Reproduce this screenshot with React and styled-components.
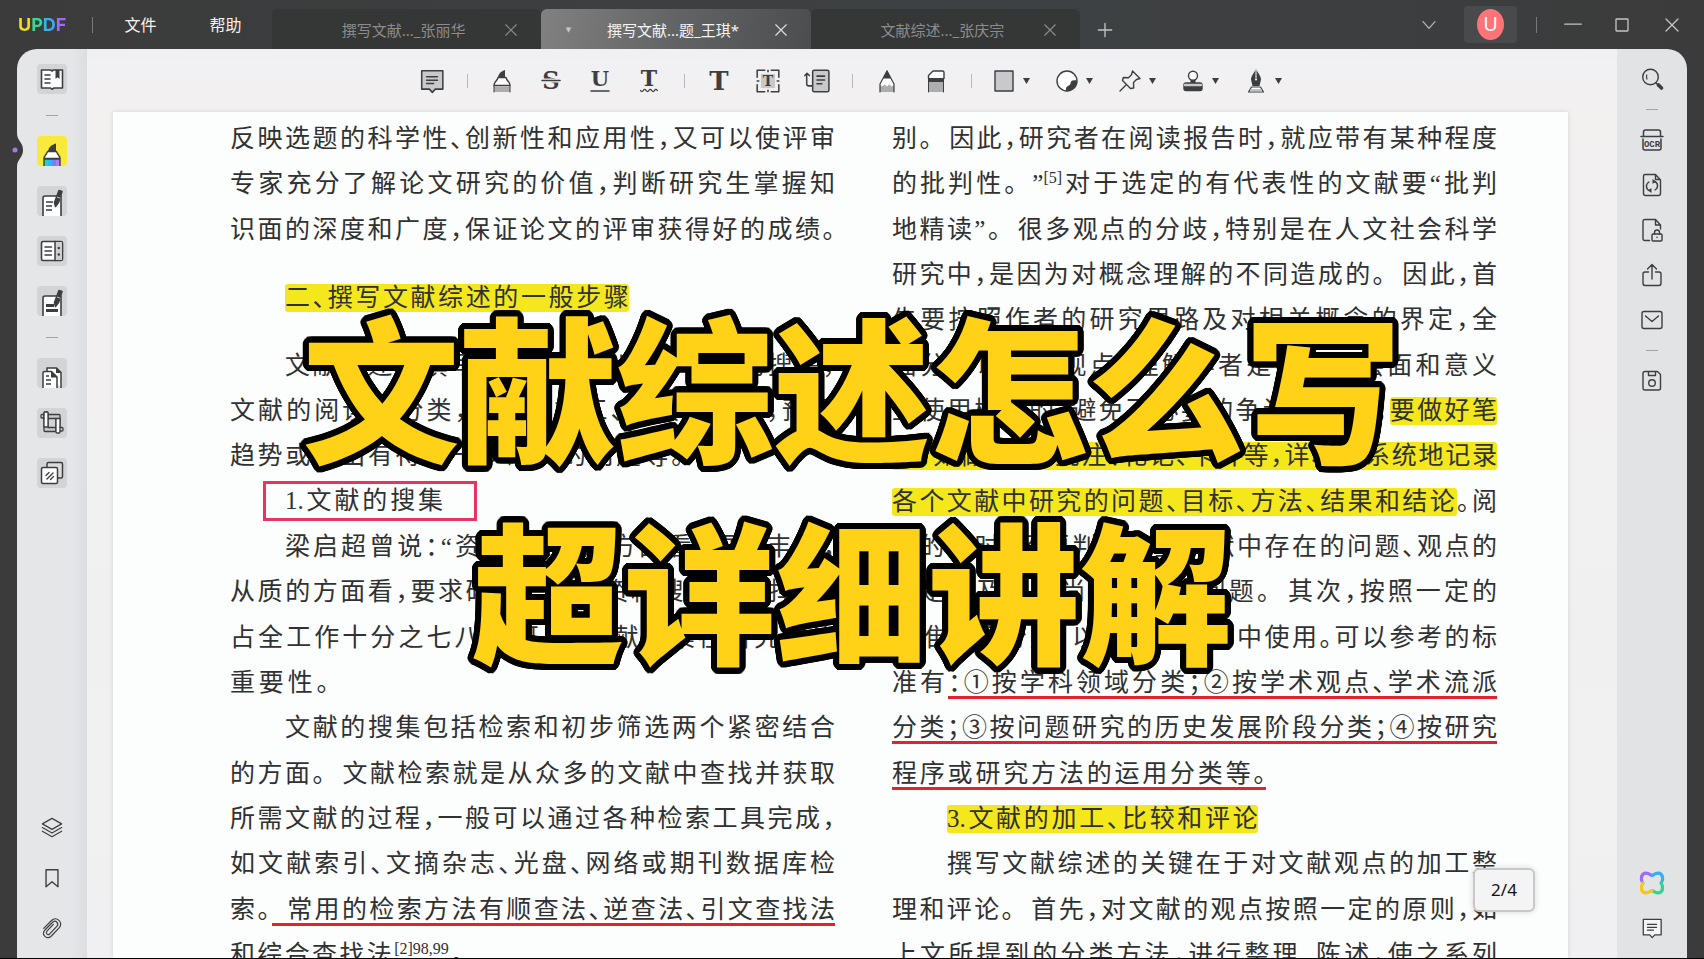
import React, { useState } from 'react';
import styled, { createGlobalStyle } from 'styled-components';

const GlobalStyle = createGlobalStyle`
  * {
    box-sizing: border-box;
  }
  body {
    margin: 0;
    background: #000;
    font-family: "Noto Sans", "Noto Sans CJK SC", sans-serif;
  }
  button {
    padding: 0;
    border: 0;
    background: none;
    color: inherit;
    font: inherit;
    cursor: pointer;
  }
`;

const INK = '#3c3e40';

/* ---------- icons ---------- */

const Svg = ({ size = 24, children, ...rest }) => (
    <svg
        width={size}
        height={size}
        viewBox="0 0 24 24"
        fill="none"
        stroke={INK}
        strokeWidth="1.4"
        strokeLinecap="round"
        strokeLinejoin="round"
        overflow="visible"
        aria-hidden="true"
        {...rest}
    >
        {children}
    </svg>
);

const CommentIcon = ({ fill = '#c9c9cb', size = 26 }) => (
    <Svg size={size}>
        <path d="M2.5 2.5h19.5v17h-7l-2.7 3-2.7-3h-7.1z" fill={fill} />
        <path d="M7 8h10M7 11.2h10M7 14.4h6.500" />
    </Svg>
);

const MarkerIcon = () => (
    <Svg>
        <path d="M8 8c1-4 3-5.500 7-7v8H8z" fill={INK} stroke="none" />
        <path d="M8 8.500h8c.8 4 4 4 4 8H4c0-4 3.200-4 4-8z" fill="#fff" />
        <path d="M4 17.500h16V23H4z" fill="#adadaf" stroke="none" />
        <path d="M4 17v6M20 17v6" strokeWidth="1" />
    </Svg>
);

const Letter = ({ children, x = 12, y = 19, size = 23 }) => (
    <text
        x={x}
        y={y}
        textAnchor="middle"
        fontFamily="'DejaVu Serif', 'Liberation Serif', serif"
        fontWeight="700"
        fontSize={size}
        fill={INK}
        stroke="none"
    >
        {children}
    </text>
);

const StrikeIcon = () => (
    <Svg>
        <Letter y={20} size={24}>S</Letter>
        <path d="M3 11.500h18" stroke="#f2f0f2" strokeWidth="4" />
        <path d="M3 11.500h18" strokeWidth="1.6" />
    </Svg>
);

const UnderlineIcon = () => (
    <Svg>
        <Letter y={17} size={21}>U</Letter>
        <path d="M3 22h18" strokeWidth="1.600" />
    </Svg>
);

const SquigglyIcon = () => (
    <Svg>
        <Letter y={17} size={22}>T</Letter>
        <path d="M3.500 21.500q1.400 2.200 2.800 0t2.800 0 2.800 0 2.800 0 2.800 0 2.800 0" strokeWidth="1.300" />
    </Svg>
);

const TextIcon = () => (
    <Svg>
        <Letter y={21} size={26}>T</Letter>
    </Svg>
);

const TextBoxIcon = () => (
    <Svg size={26}>
        <path d="M5.500 5.500h13v13h-13z" fill="#c9c9cb" stroke="none" />
        <path d="M2 8.500V2h7M15 2h7v6.500M22 15.500V22h-7M9 22H2v-6.500M12 2v1.500M12 20.500V22M2 12h1.500M20.500 12H22" />
        <Letter y={16.5} size={13}>T</Letter>
    </Svg>
);

const CalloutIcon = () => (
    <Svg size={26}>
        <rect x="8" y="2" width="15" height="20" rx="1.500" fill="#c9c9cb" />
        <path d="M12 7.500h7M12 11h7M12 14.500h4.500M7 16.500H4.500a2 2 0 0 1-2-2V5M.8 7L2.800 4.800 5 7" />
    </Svg>
);

const PencilIcon = () => (
    <Svg>
        <path d="M12 2l7 13v8H5v-8z" fill="#fff" stroke="none" />
        <path d="M5 16l2.300 1.500 2.300-2 2.400 2 2.400-2 2.300 2L19 16v7H5z" fill="#adadaf" stroke="none" />
        <path d="M5 23v-8l7-13 7 13v8" strokeWidth="1.200" />
        <path d="M12 1l4 8.500H8z" fill={INK} stroke="none" />
    </Svg>
);

const EraserIcon = () => (
    <Svg>
        <path d="M4 13h16v10H4z" fill="#adadaf" stroke="none" />
        <path d="M4.500 9.500V6.500L9 2h9.500q1.500 0 1.500 1.500v6" fill="#fff" />
        <path d="M4 9h16v4H4z" fill={INK} stroke="none" />
        <path d="M4.500 13v10M19.500 13v10" strokeWidth="1" />
    </Svg>
);

const SquareIcon = () => (
    <Svg>
        <rect x="3" y="2" width="18" height="20" fill="#c9c9cd" />
    </Svg>
);

const StickerIcon = () => (
    <Svg>
        <circle cx="12" cy="12" r="10" fill="#fff" />
        <path d="M22 11.500c-5-.5-6 0-6.500 3-.4 2.500-3 1.500-4.500 4.500v3c6 .5 11-4.500 11-10.500z" fill={INK} stroke="none" />
    </Svg>
);

const PinIcon = () => (
    <Svg>
        <path d="M14.500 2l7.500 7.500-3.500 1-3 3 .2 5.500-3.200.5L4.500 11.500l.8-3 5.200.2 3-3z" />
        <path d="M8 16l-6 6" />
    </Svg>
);

const StampIcon = () => (
    <Svg>
        <path d="M9.500 10h5v5h-5z" fill={INK} stroke="none" />
        <circle cx="12" cy="6.800" r="4.500" fill="#fff" />
        <rect x="3" y="14" width="18" height="7.500" rx="2" fill={INK} />
        <path d="M4 16h16" stroke="#c9c9cb" strokeWidth="2.500" />
    </Svg>
);

const NibIcon = () => (
    <Svg>
        <path d="M12 0c2 4 5 7 5 10.500L15.500 17h-7L7 10.500C7 7 10 4 12 0z" fill={INK} stroke="none" />
        <path d="M12 1v8" stroke="#fff" strokeWidth="1" />
        <circle cx="12" cy="10.500" r="1" fill="#fff" stroke="none" />
        <path d="M7.500 18h9l3 5h-15z" fill="#fff" strokeWidth="1.200" />
        <path d="M7 21h10" stroke="#adadaf" />
    </Svg>
);

const BookIcon = () => (
    <Svg>
        <path d="M1.500 3h9l1.500 1 1.500-1h9v18h-8.500L12 22.200 10.500 21h-9z" fill="#fff" strokeWidth="1.600" />
        <path d="M5 8h5M5 12h5M5 16h5" strokeWidth="1.600" />
        <path d="M15.500 3h4v9l-2-1.800-2 1.800z" fill={INK} stroke="none" />
    </Svg>
);

const HighlighterIcon = () => (
    <Svg size={30} viewBox="0 0 30 30">
        <path d="M11 15c1-4.500 3.500-6 8-7.500V16h-8z" fill={INK} stroke="none" />
        <path d="M10.500 15.500h9c1 3.500 3.500 4 3.500 7H7c0-3 2.500-3.500 3.500-7z" fill="#fff" />
        <path d="M7 23h4v7H7z" fill="#1fd6a4" stroke="none" />
        <path d="M11 23h4v7h-4z" fill="#2cb8f5" stroke="none" />
        <path d="M15 23h4v7h-4z" fill="#5f8bff" stroke="none" />
        <path d="M19 23h4v7h-4z" fill="#b47af0" stroke="none" />
        <path d="M7 23v7M23 23v7M7 23h16" strokeLinecap="butt" />
    </Svg>
);

const EditPageIcon = ({ bold }) => (
    <Svg size={30} viewBox="0 0 30 30" strokeLinecap="butt">
        <path d="M6 30V12q0-2 2-2h16v20" fill="#fff" strokeWidth="1.600" />
        {bold
            ? <path d="M9 19.500h8M9 24.500h12" strokeWidth="3.200" />
            : <path d="M9 16h7M9 20h6M9 24h6" strokeWidth="1.500" />}
        <path d="M22 4.500l3 1-3.500 11-3 4-1-4z" fill={INK} strokeWidth="1.600" />
        <path d="M20 11l3.500 1.200" stroke="#ddd" strokeWidth=".8" />
    </Svg>
);

const FormIcon = () => (
    <Svg>
        <rect x="1.500" y="2.500" width="21" height="19" rx="1.500" fill="#fff" strokeWidth="1.600" />
        <path d="M15 3h7v18h-7z" fill="#cfcfd1" stroke="none" />
        <path d="M15 2.500v19M5 8h6.500M5 12h6.500M5 16h6.500" strokeWidth="1.500" />
        <circle cx="18.800" cy="9" r="1.300" fill={INK} stroke="none" />
        <circle cx="18.800" cy="15.500" r="1.300" fill={INK} stroke="none" />
    </Svg>
);

const PagesIcon = () => (
    <Svg size={30} viewBox="0 0 30 30" strokeLinecap="butt">
        <path d="M10 14v-4h9.500l4.500 4.500V30" fill="#fff" strokeWidth="1.500" />
        <path d="M19 9.500l5.500 5.500H19z" fill={INK} stroke="none" />
        <path d="M6 30V15q0-1.500 1.500-1.500h7L20 19v11" fill="#fff" strokeWidth="1.500" />
        <path d="M14 13l6.500 6.500H14z" fill={INK} stroke="none" />
        <path d="M9 18h3M9 22h5M9 26h5" strokeWidth="1.300" />
    </Svg>
);

const CropIcon = () => (
    <Svg strokeWidth="1.300">
        <path d="M2.500 3.500h17.500v17M4 20.500h17.500" stroke="none" />
        <path d="M7.500 3.500H19q1 0 1 1V16h-4V7.500H7.500z" fill="#c9c9cb" />
        <path d="M4 8V2q0-1 1-1h2q1 0 1 1v14.500h8v4H5q-1 0-1-1z" fill="#c9c9cb" />
        <path d="M4 16V2q0-1 1-1h2q1 0 1 1v14z" fill="#fff" />
        <path d="M16 7.500V21q0 1 1 1h2q1 0 1-1V7.500z" fill="#fff" />
        <path d="M4 3.500H2q-1 0-1 1v1.500q0 1 1 1h2M20 16.500h2q1 0 1 1V19q0 1-1 1h-2" />
    </Svg>
);

const BatchIcon = () => (
    <Svg>
        <rect x="7" y="1.500" width="15.500" height="15.500" rx="1.500" fill="#dcdcdc" strokeWidth="1.500" />
        <rect x="1.500" y="6.500" width="16" height="16" rx="1.500" fill="#fff" strokeWidth="1.500" />
        <path d="M6 14.500l3-3M7 18l6-6M10.500 18.500l3-3" strokeWidth="1.400" />
    </Svg>
);

const LayersIcon = () => (
    <Svg size={22} strokeWidth="1.300">
        <path d="M12 1.500l10.500 6L12 13.500l-10.500-6zM1.500 11.500l10.500 6 10.500-6M1.500 15.500l10.500 6 10.500-6" />
    </Svg>
);

const BookmarkIcon = () => (
    <Svg size={22} strokeWidth="1.500">
        <path d="M5.500 3h13v18.500L12 16l-6.500 5.500z" />
    </Svg>
);

const ClipIcon = () => (
    <Svg size={22} strokeWidth="1.300">
        <path d="M3 12.500l8.500-8.700c5-5 13.500 2 8.500 7.700l-9 9.500C7 25 -.5 19.500 4 14.500l9-9c3-2.500 7 1.500 4.500 4.500l-8 8.500c-2 2-5-.5-3-3l7-7.500" />
    </Svg>
);

const SearchIcon = () => (
    <Svg>
        <circle cx="10.500" cy="10" r="7.800" />
        <path d="M6.800 8q-.8 2 .2 4" strokeWidth="1.200" />
        <path d="M16 16l2 2" />
        <path d="M18.500 18l3 3" strokeWidth="3.600" />
    </Svg>
);

const OcrIcon = () => (
    <Svg>
        <path d="M3.500 7.500V4q0-2 2-2h13q2 0 2 2v3.500M1 8.500h22M3 11v9q0 2 2 2h14q2 0 2-2v-9" strokeWidth="1.500" />
        <text x="12" y="19" textAnchor="middle" fontFamily="'Liberation Mono', monospace" fontWeight="700" fontSize="9" fill={INK} stroke="none">OCR</text>
    </Svg>
);

const ConvertIcon = () => (
    <Svg>
        <path d="M5 1.500h10.500L20.500 7v13.500q0 2-2 2h-13q-2 0-2-2V3.500q0-2 1.500-2zM15.500 2v4.500h4.500" />
        <path d="M9 9c-3.500 2-3.500 7 .5 8.500M15 17c3.500-2 3.500-7-.5-8.500" />
        <path d="M12.500 6l3.500 2.500-3.500 2.500zM11.500 15v5L8 17.500z" fill={INK} stroke="none" />
    </Svg>
);

const ProtectIcon = () => (
    <Svg>
        <path d="M9.500 22.500H5q-2 0-2-2V3.500q0-2 2-2h10.500L20.500 7v4M15.500 2v5h5" />
        <rect x="12" y="16" width="10" height="7" rx="1" />
        <path d="M14.500 16v-1.500a2.500 2.500 0 0 1 5 0V16M17 19.200v.2" />
    </Svg>
);

const ShareIcon = () => (
    <Svg>
        <path d="M8.500 9H5q-2 0-2 2v9q0 2.500 2 2.500h14q2 0 2-2.500v-9q0-2-2-2h-3.500M12 16V2M7.500 6L12 1.500 16.500 6" />
    </Svg>
);

const MailIcon = () => (
    <Svg>
        <rect x="2" y="3.500" width="20" height="17" rx="2" />
        <path d="M5.500 8l6.500 5.500L18.500 8" />
    </Svg>
);

const SaveIcon = () => (
    <Svg>
        <path d="M5 2.500h12.500l3 3V19q0 2-2 2H5q-2 0-2-2V4.500q0-2 2-2zM8.500 3v3.500h7V3" />
        <circle cx="12" cy="14" r="3.300" />
    </Svg>
);

const FlowerIcon = () => (
    <Svg size={26} strokeWidth="3">
        <path d="M3.500 12C1 8 2 3 6.500 2.800 9 2.700 10.500 4.500 12 5" stroke="#a06bf2" />
        <path d="M12 5c1.500-.5 3-2.300 5.500-2.200C22 3 23 8 20.500 12" stroke="#36aef5" />
        <path d="M20.500 12C23 16 22 21 17.500 21.200 15 21.300 13.500 19.500 12 19" stroke="#2fd68d" />
        <path d="M12 19c-1.500.5-3 2.300-5.500 2.200C2 21 1 16 3.500 12" stroke="#f7c61c" />
    </Svg>
);

const CloseIcon = ({ size = 14, color }) => (
    <Svg size={size} stroke={color} strokeWidth="2">
        <path d="M3 3l18 18M21 3L3 21" />
    </Svg>
);

/* ---------- data ---------- */

const tabs = [
    { id: 1, name: '撰写文献..._张丽华' },
    { id: 2, name: '撰写文献...题_王琪*' },
    { id: 3, name: '文献综述..._张庆宗' }
];

const tools = [
    [{ name: '注释', icon: CommentIcon }],
    [
        { name: '高亮', icon: MarkerIcon },
        { name: '删除线', icon: StrikeIcon },
        { name: '下划线', icon: UnderlineIcon },
        { name: '波浪线', icon: SquigglyIcon }
    ],
    [
        { name: '文本', icon: TextIcon },
        { name: '文本框', icon: TextBoxIcon },
        { name: '标注', icon: CalloutIcon }
    ],
    [
        { name: '铅笔', icon: PencilIcon },
        { name: '橡皮', icon: EraserIcon }
    ],
    [
        { name: '形状', icon: SquareIcon, menu: true },
        { name: '贴纸', icon: StickerIcon, menu: true },
        { name: '附件', icon: PinIcon, menu: true },
        { name: '图章', icon: StampIcon, menu: true },
        { name: '签名', icon: NibIcon, menu: true }
    ]
];

const leftTools = [
    [{ name: '阅读', icon: BookIcon }],
    [
        { name: '批注', icon: HighlighterIcon, active: true },
        { name: '编辑', icon: EditPageIcon },
        { name: '表单', icon: FormIcon },
        { name: '密文', icon: () => <EditPageIcon bold /> }
    ],
    [
        { name: '页面管理', icon: PagesIcon },
        { name: '裁剪', icon: CropIcon },
        { name: '批量', icon: BatchIcon }
    ]
];

const rightTools = [
    [{ name: '搜索', icon: SearchIcon }],
    [
        { name: 'OCR', icon: OcrIcon },
        { name: '导出', icon: ConvertIcon },
        { name: '保护', icon: ProtectIcon },
        { name: '分享', icon: ShareIcon },
        { name: '邮件', icon: MailIcon }
    ],
    [{ name: '保存', icon: SaveIcon }]
];

/* ---------- parts ---------- */

const TitleBar = () => {
    const [current, setCurrent] = useState(2);

    return (
        <Header>
            <Logo>UPDF</Logo>
            <Separator />
            <Menu>
                <MenuButton>文件</MenuButton>
                <MenuButton>帮助</MenuButton>
            </Menu>
            <TabList>
                {tabs.map(tab => (
                    <Tab key={tab.id} $active={tab.id === current}>
                        <TabArrow>{tab.id === current ? '▼' : ''}</TabArrow>
                        <TabName onClick={() => setCurrent(tab.id)}>{tab.name}</TabName>
                        <TabClose aria-label="关闭标签">
                            <CloseIcon color={tab.id === current ? '#dcdcdc' : '#8a8a8a'} />
                        </TabClose>
                    </Tab>
                ))}
            </TabList>
            <NewTab aria-label="新建标签">
                <Svg size={16} stroke="#c4c4c4" strokeWidth="2">
                    <path d="M12 2v20M2 12h20" />
                </Svg>
            </NewTab>
            <WindowButton $width={70} aria-label="更多">
                <Svg size={16} stroke="#b4b4b4" strokeWidth="2">
                    <path d="M3 7l9 10 9-10" />
                </Svg>
            </WindowButton>
            <Account aria-label="账户"><Avatar>U</Avatar></Account>
            <Separator />
            <WindowControls>
                <WindowButton $width={48} aria-label="最小化">
                    <Svg size={20} stroke="#c4c4c4"><path d="M2 11h20" /></Svg>
                </WindowButton>
                <WindowButton $width={50} aria-label="最大化">
                    <Svg size={16} stroke="#c4c4c4" strokeWidth="2"><rect x="3" y="3" width="18" height="18" rx="1" /></Svg>
                </WindowButton>
                <WindowButton $width={50} aria-label="关闭">
                    <CloseIcon size={16} color="#c4c4c4" />
                </WindowButton>
            </WindowControls>
        </Header>
    );
};

const Toolbar = () => (
    <ToolRow>
        {tools.map((group, i) => (
            <React.Fragment key={i}>
                {i > 0 && <ToolDivider />}
                {group.map(({ name, icon: Icon, menu }) => (
                    <ToolButton key={name} title={name} aria-label={name} $menu={menu}>
                        <Icon />
                        {menu && (
                            <svg width="7" height="6" viewBox="0 0 7 6" aria-hidden="true">
                                <path d="M0 0h7L3.500 6z" fill={INK} />
                            </svg>
                        )}
                    </ToolButton>
                ))}
            </React.Fragment>
        ))}
    </ToolRow>
);

const SideTools = ({ groups, gap, dash, filled }) => (
    <div>
        {groups.map((group, i) => (
            <React.Fragment key={i}>
                {i > 0 && <Dash $height={dash} />}
                <SideGroup $gap={gap}>
                    {group.map(({ name, icon: Icon, active }) => (
                        <SideButton key={name} title={name} aria-label={name} $filled={filled} $active={active}>
                            <Icon />
                        </SideButton>
                    ))}
                </SideGroup>
            </React.Fragment>
        ))}
    </div>
);

// $from is the indent and $chars the measure of a line, both in characters of a 22 character column
const LeftColumn = () => (
    <Column>
        <Line>反映选题的科学性、创新性和应用性，又可以使评审</Line>
        <Line>专家充分了解论文研究的价值，判断研究生掌握知</Line>
        <Line>识面的深度和广度，保证论文的评审获得好的成绩。</Line>
        <Line $from={2} $chars={12.5} $rows={2}><Mark>二、撰写文献综述的一般步骤</Mark></Line>
        <Line $from={2} $chars={20}>文献综述的撰写一般可分五步骤：文献的搜集，</Line>
        <Line>文献的阅读与分类，文献的加工、比较和评论，预测</Line>
        <Line $chars={16.5}>趋势或提出有待进一步研究的问题等。</Line>
        <Line $from={2} $chars={5.8}><Boxed>1.文献的搜集</Boxed></Line>
        <Line $from={2} $chars={20}>梁启超曾说：“资料，从量的方面看，要求丰富；</Line>
        <Line>从质的方面看，要求研究一手的资料搜集和选择”约</Line>
        <Line>占全工作十分之七八。&ensp;可见，文献搜集在研究中的</Line>
        <Line $chars={3.6}>重要性。</Line>
        <Line $from={2} $chars={20}>文献的搜集包括检索和初步筛选两个紧密结合</Line>
        <Line>的方面。&ensp;文献检索就是从众多的文献中查找并获取</Line>
        <Line>所需文献的过程，一般可以通过各种检索工具完成，</Line>
        <Line>如文献索引、文摘杂志、光盘、网络或期刊数据库检</Line>
        <Line>索。<Under>&ensp;常用的检索方法有顺查法、逆查法、引文查找法</Under></Line>
        <Line $chars={8.5}>和综合查找法<sup>[2]98,99</sup>。</Line>
    </Column>
);

const RightColumn = () => (
    <Column>
        <Line>别。&ensp;因此，研究者在阅读报告时，就应带有某种程度</Line>
        <Line>的批判性。&ensp;”<sup>[5]</sup>对于选定的有代表性的文献要“批判</Line>
        <Line>地精读”。&ensp;很多观点的分歧，特别是在人文社会科学</Line>
        <Line>研究中，是因为对概念理解的不同造成的。&ensp;因此，首</Line>
        <Line>先要按照作者的研究思路及对相关概念的界定，全</Line>
        <Line>面分析以及其观点，理解作者是在哪一层面和意义</Line>
        <Line>上使用概念的，避免不必要的争论。&ensp;同时，<Mark>要做好笔</Mark></Line>
        <Line><Mark>记，如做摘要、批注、札记、卡片等，详尽而系统地记录</Mark></Line>
        <Line><Mark>各个文献中研究的问题、目标、方法、结果和结论</Mark>。阅</Line>
        <Line>读的同时，还要判断这些文献中存在的问题、观点的</Line>
        <Line>不足以及现在尚未解决的问题。&ensp;其次，按照一定的</Line>
        <Line>标准进行分类，以便于在写作中使用。可以参考的标</Line>
        <Line>准有<Under>：①按学科领域分类；②按学术观点、学术流派</Under></Line>
        <Line><Under>分类；③按问题研究的历史发展阶段分类；④按研究</Under></Line>
        <Line $chars={13.6}><Under>程序或研究方法的运用分类等。</Under></Line>
        <Line $from={2} $chars={11.3}><Mark>3.文献的加工、比较和评论</Mark></Line>
        <Line $from={2} $chars={20}>撰写文献综述的关键在于对文献观点的加工整</Line>
        <Line>理和评论。&ensp;首先，对文献的观点按照一定的原则，如</Line>
        <Line>上文所提到的分类方法，进行整理、陈述，使之系列</Line>
    </Column>
);

const App = () => (
    <Shell>
        <GlobalStyle />
        <TitleBar />
        <Workspace>
            <Sidebar>
                <SideTools groups={leftTools} gap={20} dash={42} filled />
                <SideGroup $gap={20}>
                    <SideButton aria-label="图层"><LayersIcon /></SideButton>
                    <SideButton aria-label="书签"><BookmarkIcon /></SideButton>
                    <SideButton aria-label="附件"><ClipIcon /></SideButton>
                </SideGroup>
                <Notch width="12" height="34" viewBox="0 0 12 34" aria-hidden="true">
                    <path d="M5 0C5 8 11 9 11 17S5 26 5 34H0V0z" fill="#3b3b3b" />
                    <circle cx="3" cy="17" r="2.500" fill="#a57be8" />
                </Notch>
            </Sidebar>
            <Main>
                <Toolbar />
                <Page>
                    <LeftColumn />
                    <RightColumn />
                </Page>
                <PageNumber>2/4</PageNumber>
            </Main>
            <Sidebar>
                <SideTools groups={rightTools} gap={15} dash={31} />
                <SideGroup $gap={15}>
                    <SideButton aria-label="助手"><FlowerIcon /></SideButton>
                    <SideButton aria-label="评论"><CommentIcon fill="#f6f6f6" size={22} /></SideButton>
                </SideGroup>
            </Sidebar>
        </Workspace>
        <Caption>
            <CaptionLine $size={157}>文献综述怎么写</CaptionLine>
            <CaptionLine $size={152}>超详细讲解</CaptionLine>
        </Caption>
    </Shell>
);

export default App;

/* ---------- styles ---------- */

const Shell = styled.div`
  position: relative;
  display: flex;
  flex-direction: column;
  height: 100vh;
  overflow: hidden;
  border-bottom: 1px solid #000;
  background: linear-gradient(90deg, #3b3b3b, #3e4143 60%, #3b3b3b);
`;

const Header = styled.header`
  display: flex;
  align-items: center;
  height: 49px;
  padding-left: 18px;
  padding-right: 7px;
  flex-shrink: 0;
`;

const Logo = styled.div`
  width: 74px;
  font-family: Inter, "Liberation Sans", sans-serif;
  font-size: 18px;
  font-weight: 700;
  line-height: 24px;
  color: transparent;
  background: linear-gradient(90deg, #f6dc1b 0 11px, #35d79b 15px 23px, #36aef5 28px 36px, #a06bf2 40px 50px);
  background-clip: text;
`;

const Separator = styled.span`
  width: 1px;
  height: 16px;
  background: #77797a;
`;

const Menu = styled.nav`
  display: flex;
  gap: 4px;
  width: 179px;
  padding-left: 7px;
`;

const MenuButton = styled.button`
  width: 81px;
  font-size: 16px;
  line-height: 24px;
  color: #f2f2f2;
`;

const TabList = styled.div`
  display: flex;
  align-self: flex-end;
  flex: 0 1 808px;
`;

const Tab = styled.div`
  display: grid;
  grid-template-columns: 54px 1fr 60px;
  align-items: center;
  flex: 1;
  height: 40px;
  padding-top: 2px;
  border-radius: 6px 6px 0 0;
  color: ${props => (props.$active ? '#f4f4f4' : '#8c8c8c')};
  background: ${props => (props.$active ? 'linear-gradient(100deg, #818181, #626364 50%, #4c4d4e)' : '#353636')};
`;

const TabArrow = styled.span`
  font-family: "DejaVu Sans", sans-serif;
  font-size: 7px;
  text-align: center;
  color: #c8c8c8;
`;

const TabName = styled.button`
  font-size: 15px;
  line-height: 24px;
  white-space: nowrap;
`;

const TabClose = styled.button`
  display: flex;
  justify-content: center;
`;

const NewTab = styled.button`
  display: flex;
  align-self: flex-end;
  align-items: center;
  justify-content: center;
  width: 50px;
  height: 38px;
  margin-right: auto;
`;

const WindowControls = styled.div`
  display: flex;
  margin-left: 12px;
`;

const WindowButton = styled.button`
  display: flex;
  align-items: center;
  justify-content: center;
  width: ${props => props.$width}px;
  height: 36px;
`;

const Account = styled.button`
  display: flex;
  align-items: center;
  justify-content: center;
  width: 53px;
  height: 37px;
  margin-right: 19px;
  border-radius: 4px;
  background: #484a4b;
`;

const Avatar = styled.span`
  width: 27px;
  height: 31px;
  border-radius: 50%;
  background: #ff7377;
  color: #fff;
  font-size: 20px;
  line-height: 30px;
`;

const Workspace = styled.div`
  display: flex;
  flex: 1;
  min-height: 0;
  margin: 0 17px;
`;

const Sidebar = styled.aside`
  position: relative;
  display: flex;
  flex-direction: column;
  align-items: center;
  justify-content: space-between;
  width: 70px;
  flex-shrink: 0;
  padding: 15px 0;
  background: #e2e3e5;
  &:first-child {
    border-top-left-radius: 20px;
    background: linear-gradient(90deg, #e5e6e8 80%, #dcdde0);
  }
  &:last-child {
    border-top-right-radius: 20px;
  }
`;

const SideGroup = styled.div`
  display: flex;
  flex-direction: column;
  gap: ${props => props.$gap}px;
`;

const SideButton = styled.button`
  display: flex;
  align-items: center;
  justify-content: center;
  width: 30px;
  height: 30px;
  border-radius: 4px;
  ${props => props.$filled && `background: ${props.$active ? '#f8e93a' : '#d3d4d5'};`}
`;

const Dash = styled.div`
  display: flex;
  align-items: center;
  justify-content: center;
  height: ${props => props.$height}px;
  &::before {
    content: "";
    width: 12px;
    height: 1px;
    background: #a2a3a5;
  }
`;

const Notch = styled.svg`
  position: absolute;
  left: -5px;
  top: 84px;
  overflow: visible;
`;

const Main = styled.main`
  position: relative;
  display: flex;
  flex-direction: column;
  flex: 1;
  min-width: 0;
  background: linear-gradient(180deg, #f0f0f4, #f3f0f0 64px, #f0f0f2);
`;

const ToolRow = styled.div`
  display: flex;
  align-items: center;
  justify-content: center;
  height: 63px;
  flex-shrink: 0;
`;

const ToolButton = styled.button`
  display: flex;
  align-items: center;
  justify-content: ${props => (props.$menu ? 'flex-start' : 'center')};
  gap: 7px;
  width: ${props => (props.$menu ? 63 : 49)}px;
  padding-left: ${props => (props.$menu ? 10 : 0)}px;
  height: 40px;
`;

const ToolDivider = styled.span`
  width: 1px;
  height: 14px;
  margin: 0 10px;
  background: #b9b9bb;
`;

const Page = styled.article`
  display: grid;
  grid-template-columns: 1fr 1fr;
  align-items: start;
  gap: 57px;
  flex: 1;
  min-height: 0;
  margin: 0 49px 0 26px;
  padding: 4px 71px 0 117px;
  overflow: hidden;
  background: #fcfdfd;
  box-shadow: 0 0 5px rgba(0, 0, 0, 0.12);
`;

const Column = styled.section`
  display: grid;
  grid-template-rows: repeat(19, 1fr);
  min-height: 861px;
  font-family: "Liberation Serif", "Noto Sans CJK SC", sans-serif;
  font-size: 25px;
  line-height: 45px;
  color: #303132;
  font-feature-settings: "halt";
  sup {
    font-size: 16px;
    line-height: 0;
  }
`;

const Line = styled.p`
  align-self: center;
  grid-row: span ${props => props.$rows || 1};
  width: ${props => ((props.$chars || 22) / 22) * 100}%;
  margin: 0 0 0 ${props => ((props.$from || 0) / 22) * 100}%;
  text-align: justify;
  text-align-last: justify;
  white-space: nowrap;
`;

const Mark = styled.mark`
  padding-bottom: 1px;
  border-radius: 3px;
  background: #f4e81c;
  color: inherit;
`;

const Under = styled.span`
  border-bottom: 3px solid #e5222b;
`;

const Boxed = styled.span`
  display: block;
  width: 214px;
  margin-left: -22px;
  padding: 0 31px 0 19px;
  border: 3px solid #e8355f;
  line-height: 34px;
`;

const PageNumber = styled.output`
  position: absolute;
  right: 82px;
  bottom: 46px;
  width: 62px;
  border: 2px solid #c8c8ca;
  border-radius: 6px;
  background: #f5f4f5;
  box-shadow: 0 0 6px rgba(0, 0, 0, 0.15);
  color: #111;
  font-size: 17px;
  line-height: 40px;
  text-align: center;
`;

// ring of shadows, it gives the letters an outline with round corners
const outline = Array.from({ length: 32 }, (_, i) => {
    const angle = (i / 32) * Math.PI * 2;
    return `${(Math.cos(angle) * 6).toFixed(2)}px ${(Math.sin(angle) * 6).toFixed(2)}px 0 #000`;
}).join(', ');

const Caption = styled.h1`
  position: absolute;
  top: 280px;
  left: 0;
  right: 0;
  margin: 0;
  color: #ffd117;
  font-family: "Noto Sans CJK SC", sans-serif;
  font-weight: 900;
  line-height: 205px;
  text-align: center;
  white-space: nowrap;
  pointer-events: none;
  text-shadow: ${outline};
`;

const CaptionLine = styled.span`
  display: block;
  font-size: ${props => props.$size}px;
`;
